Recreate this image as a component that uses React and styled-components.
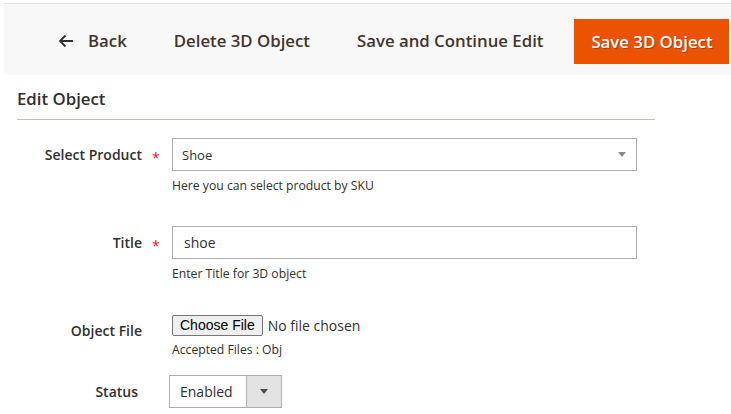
import React from 'react'
import styled, { createGlobalStyle } from 'styled-components'

const GlobalStyle = createGlobalStyle`
  body {
    margin: 0;
    background: #ffffff;
    font-family: "Open Sans", "Liberation Sans", sans-serif;
    color: #303030;
  }
`

const fields = [
  { label: 'Select Product', required: true, kind: 'select', value: 'Shoe', note: 'Here you can select product by SKU' },
  { label: 'Title', required: true, kind: 'input', value: 'shoe', note: 'Enter Title for 3D object' },
  { label: 'Object File', kind: 'file', note: 'Accepted Files : Obj' },
  { label: 'Status', kind: 'status', value: 'Enabled' },
]

function App() {
  return (
    <>
      <GlobalStyle />
      <StPage>
        <StActions>
          <StActionButton>
            <svg width="16" height="14" viewBox="0 0 16 14">
              <path d="M15 7H2M7.5 1.5L2 7l5.5 5.5" fill="none" stroke="#303030" strokeWidth="1.8" />
            </svg>
            <span>Back</span>
          </StActionButton>
          <StActionButton>Delete 3D Object</StActionButton>
          <StActionButton>Save and Continue Edit</StActionButton>
          <StPrimary>Save 3D Object</StPrimary>
        </StActions>

        <StSection>
          <StTitle>Edit Object</StTitle>
          <StForm>
            {fields.map((f) => (
              <StRow key={f.label} $kind={f.kind}>
                <StLabel $kind={f.kind}>{f.label}</StLabel>
                <StStar>{f.required ? '*' : ''}</StStar>
                <StControl>
                  {f.kind === 'select' && (
                    <StSelect>
                      <span>{f.value}</span>
                      <StTriangle />
                    </StSelect>
                  )}
                  {f.kind === 'input' && <StInput>{f.value}</StInput>}
                  {f.kind === 'file' && (
                    <StFileLine>
                      <StFileButton>Choose File</StFileButton>
                      <span>No file chosen</span>
                    </StFileLine>
                  )}
                  {f.kind === 'status' && (
                    <StStatus>
                      <StStatusValue>{f.value}</StStatusValue>
                      <StStatusArrow><StTriangle $dark /></StStatusArrow>
                    </StStatus>
                  )}
                  {f.note && <StNote $kind={f.kind}>{f.note}</StNote>}
                </StControl>
              </StRow>
            ))}
          </StForm>
        </StSection>
      </StPage>
    </>
  )
}

const StPage = styled.div`
  width: 731px;
  height: 414px;
  overflow: hidden;
`

const StActions = styled.div`
  margin: 3px 0 0 4px;
  height: 71px;
  border-top: 1px solid #e3e3e3;
  background: #f8f8f8;
  display: flex;
  align-items: center;
  padding-left: 54px;
`

const StActionButton = styled.div`
  display: flex;
  align-items: center;
  gap: 14px;
  font-size: 16.8px;
  font-weight: 600;
  color: #41362f;
  margin-right: 47px;
  white-space: nowrap;
  margin-top: 2px;
`

const StPrimary = styled.div`
  margin-left: -16px;
  width: 155px;
  height: 45px;
  margin-top: 3px;
  background: #eb5202;
  color: #ffffff;
  font-size: 16.8px;
  font-weight: 600;
  display: flex;
  align-items: center;
  justify-content: center;
  text-shadow: 1px 1px 0 rgba(0, 0, 0, 0.25);
  white-space: nowrap;
`

const StSection = styled.div`
  padding: 12px 0 0 17px;
`

const StTitle = styled.div`
  width: 638px;
  font-size: 16.8px;
  font-weight: 600;
  color: #303030;
  padding-bottom: 9px;
  border-bottom: 1px solid #cac3b4;
`

const StForm = styled.div`
  display: flex;
  flex-direction: column;
  padding-top: 18px;
`

const StRow = styled.div`
  display: grid;
  grid-template-columns: 125px 30px 465px;
  align-items: start;
  margin-bottom: ${(p) => (p.$kind === 'file' ? '17px' : '32px')};
`

const StLabel = styled.div`
  text-align: right;
  font-size: 14px;
  font-weight: 600;
  color: #303030;
  line-height: 33px;
  height: 33px;
  padding-right: ${(p) => (p.$kind === 'status' ? '4px' : '0')};
`

const StStar = styled.div`
  color: #e22626;
  font-size: 14px;
  line-height: 40px;
  padding-left: 10px;
`

const StControl = styled.div`
  display: flex;
  flex-direction: column;
`

const StSelect = styled.div`
  height: 33px;
  box-sizing: border-box;
  border: 1px solid #adadad;
  display: flex;
  align-items: center;
  justify-content: space-between;
  padding: 0 10px 0 9px;
  font-size: 13px;
  color: #303030;
`

const StTriangle = styled.span`
  width: 0;
  height: 0;
  border-left: 4px solid transparent;
  border-right: 4px solid transparent;
  border-top: 5px solid ${(p) => (p.$dark ? '#514943' : '#8a8a8a')};
`

const StInput = styled.div`
  height: 33px;
  box-sizing: border-box;
  border: 1px solid #adadad;
  display: flex;
  align-items: center;
  padding: 0 11px;
  font-size: 14px;
  color: #303030;
`

const StFileLine = styled.div`
  display: flex;
  align-items: center;
  gap: 5px;
  font-size: 14px;
  color: #303030;
  height: 22px;
`

const StFileButton = styled.div`
  height: 21px;
  box-sizing: border-box;
  padding: 0 7px;
  display: flex;
  align-items: center;
  background: #efefef;
  border: 1px solid #767676;
  border-radius: 2px;
  font-family: "Liberation Sans", Arial, sans-serif;
  font-size: 14px;
  color: #000000;
`

const StNote = styled.div`
  font-size: 12.2px;
  color: #303030;
  margin-top: ${(p) => (p.$kind === 'file' ? '5px' : '6px')};
`

const StStatus = styled.div`
  margin-left: -3px;
  width: 113px;
  height: 33px;
  box-sizing: border-box;
  border: 1px solid #adadad;
  display: flex;
`

const StStatusValue = styled.div`
  flex: 1;
  display: flex;
  align-items: center;
  padding-left: 10px;
  font-size: 14px;
  color: #303030;
`

const StStatusArrow = styled.div`
  width: 34px;
  border-left: 1px solid #adadad;
  background: #e3e3e3;
  display: flex;
  align-items: center;
  justify-content: center;
`

export default App
